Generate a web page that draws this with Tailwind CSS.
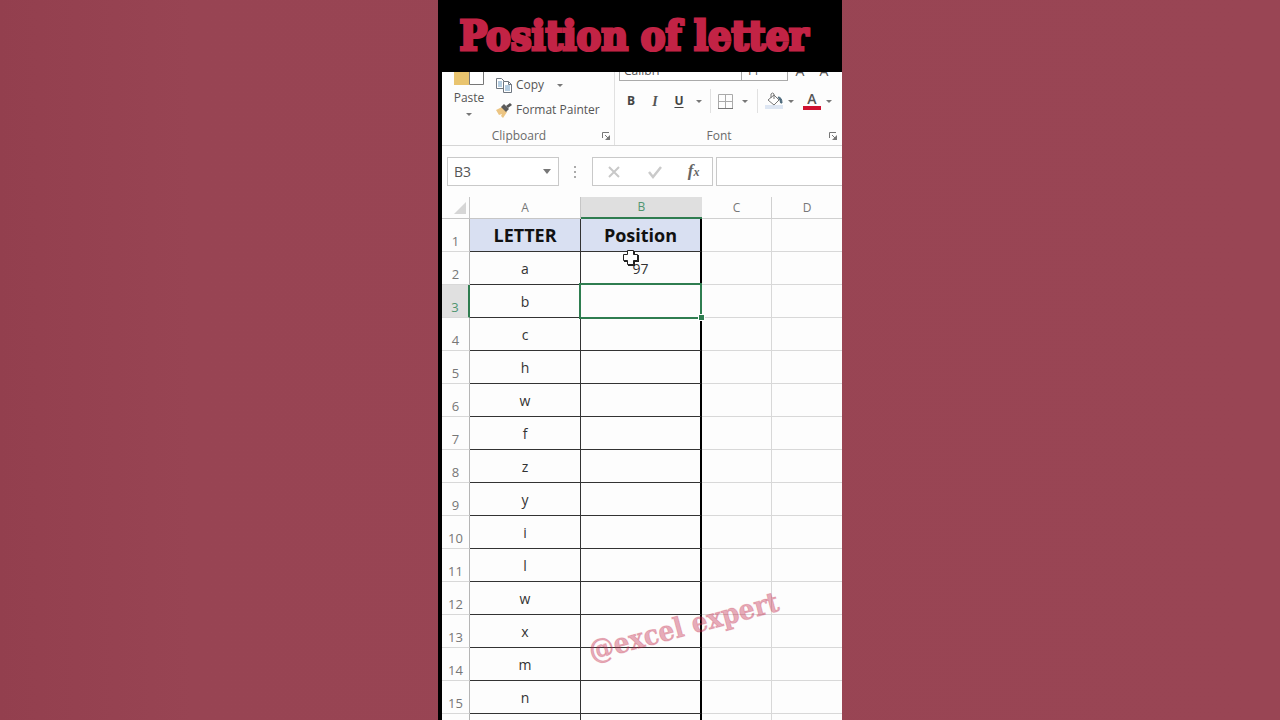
<!DOCTYPE html>
<html lang="en">
<head>
    <meta charset="UTF-8">
    <meta name="viewport" content="width=device-width, initial-scale=1.0">
    <title>Position of letter</title>
    <script src="https://cdn.jsdelivr.net/npm/@tailwindcss/browser@4"></script>
</head>
<body class="bg-[#984453] font-['Open_Sans',sans-serif] text-[#555]">
    <div class="h-screen overflow-hidden bg-linear-to-r from-[#933f4e] via-[#984453] via-15% to-[#994554]">
        <main class="relative mx-auto flex h-full w-full max-w-[404px] flex-col overflow-hidden bg-black">
            <header class="flex h-[72px] shrink-0 items-center justify-center pr-3">
                <h1 class="whitespace-nowrap font-['DejaVu_Serif_Condensed','DejaVu_Serif',serif] text-[41px] font-bold leading-10 text-[#c22345] [-webkit-text-stroke:3px_#c22345]">Position of letter</h1>
            </header>

            <div class="ml-1 grow bg-[#fdfdfd]">
                <!-- Ribbon -->
                <div class="flex h-[74px] items-end overflow-hidden border-b border-[#d5d5d5] text-[12px]">
                    <section class="flex w-[173px] shrink-0 flex-col border-r border-[#e1e1e1]">
                        <div class="flex items-end pb-[5px]">
                            <button class="ml-1 flex w-[46px] flex-col items-center">
                                <svg class="h-8 w-8" viewBox="0 0 32 32" fill="none">
                                    <path d="M1 2h22v10h-7v19H1z" fill="#e9c46f"/>
                                    <path d="M16.5 12.500h14v18h-14z" fill="#fff" stroke="#777"/>
                                </svg>
                                <span class="mt-1 leading-4">Paste</span>
                                <svg class="my-1 h-2 w-2" viewBox="0 0 8 8"><path d="M1 3h6L4 6z" fill="#777"/></svg>
                            </button>
                            <div class="ml-1 flex flex-col">
                                <button class="flex h-[25px] items-center gap-1 whitespace-nowrap">
                                    <svg class="h-4 w-4" viewBox="0 0 16 16" fill="#fff" stroke="#6f7780">
                                        <path d="M.5 1.500h5l3 3v7h-8z"/>
                                        <path d="M2 5h4M2 7h4M2 9h4" stroke="#6b9bc3"/>
                                        <path d="M7.500 4.500h5l3 3v8h-8z"/>
                                        <path d="M12.500 4.500v3h3" fill="none"/>
                                        <path d="M9 9h5M9 11h5M9 13h5" stroke="#6b9bc3"/>
                                    </svg>
                                    Copy
                                    <svg class="ml-2 h-2 w-2" viewBox="0 0 8 8"><path d="M1 3h6L4 6z" fill="#777"/></svg>
                                </button>
                                <button class="flex h-[25px] items-center gap-1 whitespace-nowrap">
                                    <svg class="h-4 w-4" viewBox="0 0 16 16">
                                        <path d="M0 8l6-3 5 5-4 6-2-2 1-2-3 1z" fill="#ecc583"/>
                                        <path d="M5 5l3-3 5 5-3 3z" fill="#5b5b5b"/>
                                        <path d="M10 4l4-3 2 2-4 3z" fill="#555"/>
                                    </svg>
                                    Format Painter
                                </button>
                            </div>
                        </div>
                        <div class="flex h-[18px] items-center pr-1">
                            <span class="grow pr-1.5 text-center text-[#6a6a6a]">Clipboard</span>
                            <button aria-label="Clipboard settings"><svg class="h-2 w-2" viewBox="0 0 8 8" fill="none" stroke="#777"><path d="M.5 6V.5H7M3 3l3 3"/><path d="M8 3v5H3z" fill="#777" stroke="none"/></svg></button>
                        </div>
                    </section>

                    <section class="flex min-w-0 grow flex-col">
                        <div class="mb-2 ml-1 flex items-end">
                            <select aria-label="Font name" class="h-6 w-[123px] appearance-none border border-[#aaa] bg-white px-1 pt-1 text-[12px]"><option>Calibri</option></select>
                            <select aria-label="Font size" class="-ml-px h-6 w-[47px] appearance-none border border-[#aaa] bg-white px-1 pt-1 text-[12px]"><option>11</option></select>
                            <button class="ml-1 h-6 w-4 pt-1 text-[14px] leading-5" aria-label="Increase font size">A</button>
                            <button class="ml-2 h-6 w-4 pt-1 text-[14px] leading-5" aria-label="Decrease font size">A</button>
                        </div>
                        <div class="flex h-6 items-center pl-1">
                            <button class="w-6 font-bold text-[#444]">B</button>
                            <button class="w-6 font-['Liberation_Serif',serif] text-[14px] font-bold italic">I</button>
                            <button class="w-6 font-bold text-[#444] underline underline-offset-2">U</button>
                            <button class="w-4" aria-label="Underline styles"><svg class="ml-1 h-2 w-2" viewBox="0 0 8 8"><path d="M1 3h6L4 6z" fill="#777"/></svg></button>
                            <span class="mx-[3px] h-6 w-px bg-[#e1e1e1]"></span>
                            <button class="ml-1" aria-label="Borders"><svg class="h-[15px] w-[15px]" viewBox="0 0 15 15" fill="none" stroke="#aaa"><path d="M.5.500h14v14H.5zM7.500 0v15M0 7.500h15"/><path d="M0 14.500h15" stroke="#777"/></svg></button>
                            <button class="ml-2" aria-label="Border styles"><svg class="h-2 w-2" viewBox="0 0 8 8"><path d="M1 3h6L4 6z" fill="#777"/></svg></button>
                            <span class="ml-2 mr-[7px] h-6 w-px bg-[#e1e1e1]"></span>
                            <button aria-label="Fill color"><svg class="h-[18px] w-[18px]" viewBox="0 0 18 18" fill="none" stroke="#777"><path d="M0 13h18v4H0z" fill="#dde6f3" stroke="none"/><path d="M3 8l6-5 5 5-5 5z" fill="#fff"/><path d="M6 6V2q1.500-2 3 0v5"/><path d="M13 5q4 0 4 6-2 1-2-3z" fill="#4d6a7c" stroke="#4d6a7c"/></svg></button>
                            <button class="ml-1" aria-label="Fill colors"><svg class="h-2 w-2" viewBox="0 0 8 8"><path d="M1 3h6L4 6z" fill="#777"/></svg></button>
                            <button class="ml-2 h-[18px] w-[18px] border-b-4 border-[#cf1130] text-[14px] font-semibold leading-[14px]">A</button>
                            <button class="ml-1" aria-label="Font colors"><svg class="h-2 w-2" viewBox="0 0 8 8"><path d="M1 3h6L4 6z" fill="#777"/></svg></button>
                        </div>
                        <div class="mt-3.5 flex h-[18px] items-center pr-[5px]">
                            <span class="grow pr-1.5 text-center text-[#6a6a6a]">Font</span>
                            <button aria-label="Font settings"><svg class="h-2 w-2" viewBox="0 0 8 8" fill="none" stroke="#777"><path d="M.5 6V.5H7M3 3l3 3"/><path d="M8 3v5H3z" fill="#777" stroke="none"/></svg></button>
                        </div>
                    </section>
                </div>

                <!-- Formula bar -->
                <div class="flex h-[51px] items-start pl-[5px] pt-[11px]">
                    <div class="flex h-[29px] w-28 items-center border border-[#c9c9c9] bg-white pr-1.5">
                        <input aria-label="Name box" value="B3" class="w-0 grow pl-1.5 text-[14px] outline-none">
                        <button aria-label="Named ranges"><svg class="h-2.5 w-2.5" viewBox="0 0 10 10"><path d="M1 2h8L5 7z" fill="#777"/></svg></button>
                    </div>
                    <svg class="mx-[14px] h-[29px] w-[5px]" viewBox="0 0 5 29" fill="#aaa"><path d="M1 9h2v2H1zM1 14h2v2H1zM1 19h2v2H1z"/></svg>
                    <div class="flex h-[29px] w-[121px] items-center justify-around border border-[#c9c9c9] bg-white">
                        <button aria-label="Cancel"><svg class="h-4 w-4" viewBox="0 0 16 16" fill="none" stroke="#c8c8c8" stroke-width="2"><path d="M3 3l10 10M13 3L3 13"/></svg></button>
                        <button aria-label="Enter"><svg class="h-4 w-4" viewBox="0 0 16 16" fill="none" stroke="#cacaca" stroke-width="2.500"><path d="M2 8l4 5 8-10"/></svg></button>
                        <button aria-label="Insert function" class="font-['Liberation_Serif',serif] text-[17px] font-bold italic leading-5 text-[#666]">f<span class="text-[12px]">x</span></button>
                    </div>
                    <input aria-label="Formula" class="ml-[3px] h-[29px] w-0 grow border border-r-0 border-[#c9c9c9] bg-white px-2 outline-none">
                </div>

                <!-- Sheet -->
                <table class="w-full table-fixed border-separate border-spacing-0 text-center">
                    <colgroup>
                        <col class="w-[28px]"><col class="w-[111px]"><col class="w-[121px]"><col class="w-[70px]"><col>
                    </colgroup>
                    <thead>
                        <tr class="h-[22px] text-[12px] leading-[18px] text-[#777] [&>th]:border-b [&>th]:p-0 [&>th]:font-normal">
                            <th class="border-r border-[#c6c6c6]"><svg class="ml-auto mr-[3px] h-3 w-3" viewBox="0 0 12 12"><path d="M12 0v12H0z" fill="#d6d6d6"/></svg></th>
                            <th class="border-r border-[#c6c6c6]">A</th>
                            <th class="border-b-2! border-[#2f7d50] bg-[#dfdfdf] text-[#4f9570]">B</th>
                            <th class="border-r border-[#d0d0d0]">C</th>
                            <th class="border-[#d0d0d0]">D</th>
                        </tr>
                    </thead>
                    <tbody id="rows"></tbody>
                </table>
            </div>

            <!-- Mouse pointer -->
            <svg class="absolute left-[184px] top-[249px] h-[18px] w-[18px]" viewBox="0 0 18 18"><path d="M6 2h7v4h4v7h-4v4H6v-4H2V6h4z" fill="#222"/><path d="M5.500 1.500h6v4h4v6h-4v4h-6v-4h-4v-6h4z" fill="#fff" stroke="#222"/></svg>
            <p class="absolute left-[148px] top-[611px] -rotate-15 whitespace-nowrap font-['DejaVu_Serif_Condensed','DejaVu_Serif',serif] text-[28px] font-bold leading-8 text-[#c22345]/40 [-webkit-text-stroke:1px_#c2234533]">@excel expert</p>
        </main>
    </div>

    <script>
        const letters = ['LETTER', 'a', 'b', 'c', 'h', 'w', 'f', 'z', 'y', 'i', 'l', 'w', 'x', 'm', 'n', ''];
        const positions = { 1: 'Position', 2: '97' };
        const selected = 3;

        const selection = `
            <span class="absolute -top-[2px] -bottom-[2px] -left-[2px] -right-[2px] border-2 border-[#2f7d50]"></span>
            <span class="absolute -right-[5px] -bottom-[4px] h-[7px] w-[7px] border border-white bg-[#2f7d50]"></span>`;

        document.getElementById('rows').innerHTML = letters.map((letter, i) => {
            const n = i + 1;
            const head = n === 1 ? 'bg-[#d9e0f2] py-0 text-[18px] font-bold text-[#111]' : 'pt-0.5 pb-0 text-[14px] font-medium text-[#333]';
            const rowHead = n === selected
                ? 'border-r-2 border-r-[#2f7d50] bg-[#e0e0e0] text-[#4f9570]'
                : 'border-r border-r-[#b5b5b5] text-[#777]';
            return `
                <tr class="h-[33px] leading-6">
                    <th class="border-b border-b-[#d8d8d8] p-0 align-bottom text-[13px] leading-5 font-normal ${rowHead}">${n}</th>
                    <td class="border-r border-b border-[#333] px-0 ${head}">${letter}</td>
                    <td class="relative border-r-2 border-b border-r-black border-b-[#333] px-0 ${head} ${n === selected ? 'z-10' : ''}">${positions[n] || ''}${n === selected ? selection : ''}</td>
                    <td class="border-r border-b border-[#d8d8d8] p-0"></td>
                    <td class="border-b border-[#d8d8d8] p-0"></td>
                </tr>`;
        }).join('');
    </script>
</body>
</html>
